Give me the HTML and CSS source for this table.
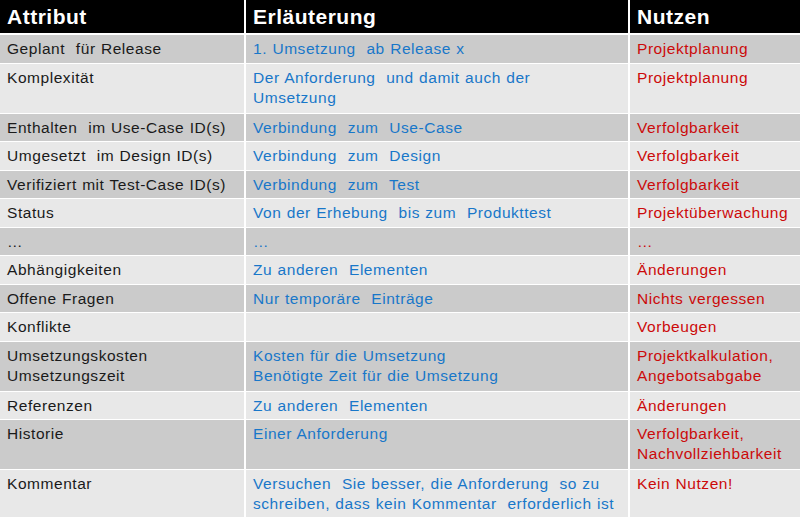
FILE: index.html
```html
<!DOCTYPE html>
<html lang="de">
<head>
<meta charset="utf-8">
<title>Attribute</title>
<link rel="stylesheet" href="styles.css">
</head>
<body>
<div class="table">
  <div class="row head">
    <div class="cell">Attribut</div>
    <div class="cell">Erläuterung</div>
    <div class="cell">Nutzen</div>
  </div>
  <div class="row dark">
    <div class="cell">Geplant  für Release</div>
    <div class="cell blue">1. Umsetzung  ab Release x</div>
    <div class="cell red">Projektplanung</div>
  </div>
  <div class="row light double">
    <div class="cell">Komplexität</div>
    <div class="cell blue">Der Anforderung  und damit auch der<br>Umsetzung</div>
    <div class="cell red">Projektplanung</div>
  </div>
  <div class="row dark">
    <div class="cell">Enthalten  im Use-Case ID(s)</div>
    <div class="cell blue">Verbindung  zum  Use-Case</div>
    <div class="cell red">Verfolgbarkeit</div>
  </div>
  <div class="row light">
    <div class="cell">Umgesetzt  im Design ID(s)</div>
    <div class="cell blue">Verbindung  zum  Design</div>
    <div class="cell red">Verfolgbarkeit</div>
  </div>
  <div class="row dark">
    <div class="cell">Verifiziert mit Test-Case ID(s)</div>
    <div class="cell blue">Verbindung  zum  Test</div>
    <div class="cell red">Verfolgbarkeit</div>
  </div>
  <div class="row light">
    <div class="cell">Status</div>
    <div class="cell blue">Von der Erhebung  bis zum  Produkttest</div>
    <div class="cell red">Projektüberwachung</div>
  </div>
  <div class="row dark">
    <div class="cell">…</div>
    <div class="cell blue">…</div>
    <div class="cell red">…</div>
  </div>
  <div class="row light">
    <div class="cell">Abhängigkeiten</div>
    <div class="cell blue">Zu anderen  Elementen</div>
    <div class="cell red">Änderungen</div>
  </div>
  <div class="row dark">
    <div class="cell">Offene Fragen</div>
    <div class="cell blue">Nur temporäre  Einträge</div>
    <div class="cell red">Nichts vergessen</div>
  </div>
  <div class="row light">
    <div class="cell">Konflikte</div>
    <div class="cell blue"></div>
    <div class="cell red">Vorbeugen</div>
  </div>
  <div class="row dark double">
    <div class="cell">Umsetzungskosten<br>Umsetzungszeit</div>
    <div class="cell blue">Kosten für die Umsetzung<br>Benötigte Zeit für die Umsetzung</div>
    <div class="cell red">Projektkalkulation,<br>Angebotsabgabe</div>
  </div>
  <div class="row light">
    <div class="cell">Referenzen</div>
    <div class="cell blue">Zu anderen  Elementen</div>
    <div class="cell red">Änderungen</div>
  </div>
  <div class="row dark double">
    <div class="cell">Historie</div>
    <div class="cell blue">Einer Anforderung</div>
    <div class="cell red">Verfolgbarkeit,<br>Nachvollziehbarkeit</div>
  </div>
  <div class="row light double">
    <div class="cell">Kommentar</div>
    <div class="cell blue">Versuchen  Sie besser, die Anforderung  so zu<br>schreiben, dass kein Kommentar  erforderlich ist</div>
    <div class="cell red">Kein Nutzen!</div>
  </div>
</div>
</body>
</html>
```

FILE: styles.css
```css
html, body {
  margin: 0;
  padding: 0;
  background: #ffffff;
}

body {
  width: 800px;
  height: 517px;
  overflow: hidden;
  font-family: "Liberation Sans", Arial, sans-serif;
}

.table {
  display: flex;
  flex-direction: column;
  gap: 1px;
  background: #ffffff;
}

.row {
  display: grid;
  grid-template-columns: 244px 382px 1fr;
  column-gap: 2px;
  height: 27.5px;
  font-size: 15.5px;
  letter-spacing: 0.55px;
  word-spacing: 0.5px;
  line-height: 20px;
  color: #1a1a1a;
}

.row.double {
  height: 49px;
}

.cell {
  padding: 4px 0 0 7px;
  white-space: pre;
  overflow: hidden;
}

.dark .cell {
  background: #cbcbcb;
}

.light .cell {
  background: #e8e8e8;
}

.row.head {
  height: 33px;
  margin-bottom: 1px;
  font-size: 21px;
  font-weight: bold;
  letter-spacing: 0.5px;
  word-spacing: 0;
  line-height: 26px;
  color: #ffffff;
}

.head .cell {
  background: #000000;
  padding-top: 4px;
}

.blue {
  color: #1877c9;
}

.red {
  color: #cc0a0a;
}
```
